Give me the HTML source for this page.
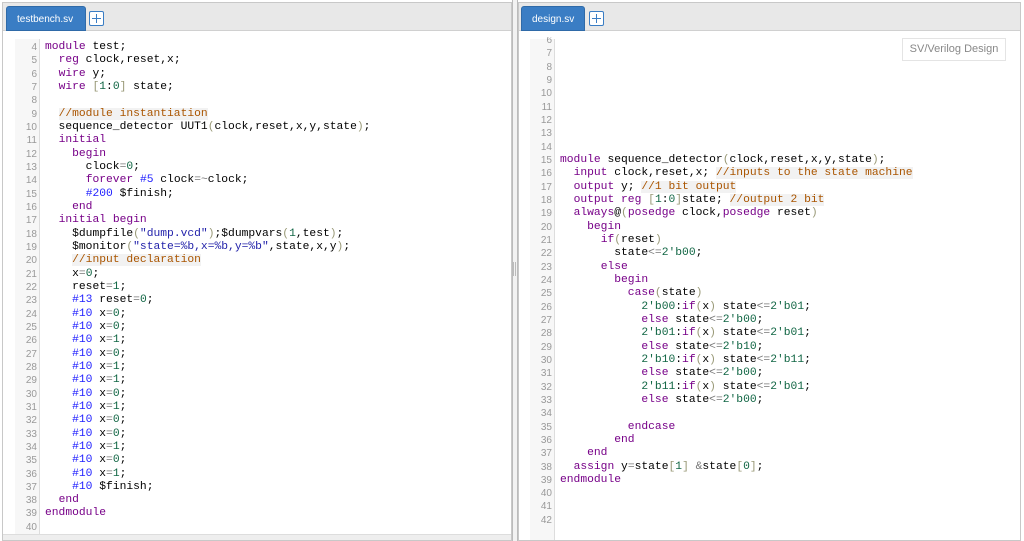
<!DOCTYPE html>
<html><head><meta charset="utf-8"><style>
*{margin:0;padding:0;box-sizing:border-box}
body{width:1024px;height:541px;background:#fff;overflow:hidden;position:relative;font-family:"Liberation Sans",sans-serif}
.panel{position:absolute;top:2px;height:539px;border:1px solid #c8c8c8;background:#fff;overflow:hidden}
.tabbar{position:absolute;left:0;right:0;top:0;height:28px;background:#e8e8e8;border-bottom:1px solid #d0d0d0}
.tab{position:absolute;top:3px;height:25px;background:#3a7dc4;color:#fff;font-size:10px;line-height:25px;padding-left:10px;border-radius:3px 3px 0 0;border:1px solid #2f6aa8}
.plus{position:absolute;top:8px;width:15px;height:15px;border:1.5px solid #3a7dc4;border-radius:2px;background:#fff}
.plus:before{content:"";position:absolute;left:2px;right:2px;top:5.5px;height:1.5px;background:#3a7dc4}
.plus:after{content:"";position:absolute;top:2px;bottom:2px;left:5.5px;width:1.5px;background:#3a7dc4}
.gut{position:absolute;top:36px;bottom:0;width:25px;background:#f7f7f7;border-right:1px solid #ddd}
.code{position:absolute;font-family:"Liberation Mono",monospace;font-size:11.3px;line-height:13.33px;white-space:pre;color:#000}
.nums{position:absolute;font-family:"Liberation Sans",sans-serif;font-size:10px;line-height:13.33px;color:#999;text-align:right;width:22px;white-space:pre}
.k{color:#708}.n{color:#164}.h{color:#22f}.s{color:#22a}.c{color:#a50;background:#f2f2f2}.p{color:#997}.o{color:#777}
.hs{position:absolute;left:0;right:0;bottom:0;height:6px;background:#eee;border-top:1px solid #ddd}
</style></head><body>
<div style="position:absolute;left:512px;top:0;width:6px;height:541px;background:#f2f2f2;border-left:1px solid #bbb;border-right:1px solid #bbb"></div>
<div style="position:absolute;left:513px;top:262px;width:3px;height:14px;border-left:1px solid #bbb;border-right:1px solid #bbb"></div>

<div class="panel" style="left:2px;width:510px">
<div class="tabbar"></div>
<div class="tab" style="left:3px;width:80px">testbench.sv</div>
<div class="plus" style="left:86px"></div>
<div class="gut" style="left:12px"></div>
<div class="nums" style="left:12px;top:38px">4
5
6
7
8
9
10
11
12
13
14
15
16
17
18
19
20
21
22
23
24
25
26
27
28
29
30
31
32
33
34
35
36
37
38
39
40
41</div>
<div class="code" style="left:42px;top:38px"><span class="k">module</span> test;
  <span class="k">reg</span> clock,reset,x;
  <span class="k">wire</span> y;
  <span class="k">wire</span> <span class="p">[</span><span class="n">1</span>:<span class="n">0</span><span class="p">]</span> state;

  <span class="c">//module instantiation</span>
  sequence_detector UUT1<span class="p">(</span>clock,reset,x,y,state<span class="p">)</span>;
  <span class="k">initial</span>
    <span class="k">begin</span>
      clock<span class="o">=</span><span class="n">0</span>;
      <span class="k">forever</span> <span class="h">#5</span> clock<span class="o">=~</span>clock;
      <span class="h">#200</span> $finish;
    <span class="k">end</span>
  <span class="k">initial</span> <span class="k">begin</span>
    $dumpfile<span class="p">(</span><span class="s">"dump.vcd"</span><span class="p">)</span>;$dumpvars<span class="p">(</span><span class="n">1</span>,test<span class="p">)</span>;
    $monitor<span class="p">(</span><span class="s">"state=%b,x=%b,y=%b"</span>,state,x,y<span class="p">)</span>;
    <span class="c">//input declaration</span>
    x<span class="o">=</span><span class="n">0</span>;
    reset<span class="o">=</span><span class="n">1</span>;
    <span class="h">#13</span> reset<span class="o">=</span><span class="n">0</span>;
    <span class="h">#10</span> x<span class="o">=</span><span class="n">0</span>;
    <span class="h">#10</span> x<span class="o">=</span><span class="n">0</span>;
    <span class="h">#10</span> x<span class="o">=</span><span class="n">1</span>;
    <span class="h">#10</span> x<span class="o">=</span><span class="n">0</span>;
    <span class="h">#10</span> x<span class="o">=</span><span class="n">1</span>;
    <span class="h">#10</span> x<span class="o">=</span><span class="n">1</span>;
    <span class="h">#10</span> x<span class="o">=</span><span class="n">0</span>;
    <span class="h">#10</span> x<span class="o">=</span><span class="n">1</span>;
    <span class="h">#10</span> x<span class="o">=</span><span class="n">0</span>;
    <span class="h">#10</span> x<span class="o">=</span><span class="n">0</span>;
    <span class="h">#10</span> x<span class="o">=</span><span class="n">1</span>;
    <span class="h">#10</span> x<span class="o">=</span><span class="n">0</span>;
    <span class="h">#10</span> x<span class="o">=</span><span class="n">1</span>;
    <span class="h">#10</span> $finish;
  <span class="k">end</span>
<span class="k">endmodule</span>
</div>
<div class="hs"></div>
</div>

<div class="panel" style="left:518px;width:503px">
<div class="tabbar"></div>
<div class="tab" style="left:2px;width:64px">design.sv</div>
<div class="plus" style="left:70px"></div>
<div class="gut" style="left:11px;top:36px"></div>
<div style="position:absolute;left:10px;right:0;top:34px;bottom:0;overflow:hidden">
<div class="nums" style="left:1px;top:-3px">6
7
8
9
10
11
12
13
14
15
16
17
18
19
20
21
22
23
24
25
26
27
28
29
30
31
32
33
34
35
36
37
38
39
40
41
42</div>
<div class="code" style="left:31px;top:-3px">








<span class="k">module</span> sequence_detector<span class="p">(</span>clock,reset,x,y,state<span class="p">)</span>;
  <span class="k">input</span> clock,reset,x; <span class="c">//inputs to the state machine</span>
  <span class="k">output</span> y; <span class="c">//1 bit output</span>
  <span class="k">output</span> <span class="k">reg</span> <span class="p">[</span><span class="n">1</span>:<span class="n">0</span><span class="p">]</span>state; <span class="c">//output 2 bit</span>
  <span class="k">always</span>@<span class="p">(</span><span class="k">posedge</span> clock,<span class="k">posedge</span> reset<span class="p">)</span>
    <span class="k">begin</span>
      <span class="k">if</span><span class="p">(</span>reset<span class="p">)</span>
        state<span class="o">&lt;=</span><span class="n">2'b00</span>;
      <span class="k">else</span>
        <span class="k">begin</span>
          <span class="k">case</span><span class="p">(</span>state<span class="p">)</span>
            <span class="n">2'b00</span>:<span class="k">if</span><span class="p">(</span>x<span class="p">)</span> state<span class="o">&lt;=</span><span class="n">2'b01</span>;
            <span class="k">else</span> state<span class="o">&lt;=</span><span class="n">2'b00</span>;
            <span class="n">2'b01</span>:<span class="k">if</span><span class="p">(</span>x<span class="p">)</span> state<span class="o">&lt;=</span><span class="n">2'b01</span>;
            <span class="k">else</span> state<span class="o">&lt;=</span><span class="n">2'b10</span>;
            <span class="n">2'b10</span>:<span class="k">if</span><span class="p">(</span>x<span class="p">)</span> state<span class="o">&lt;=</span><span class="n">2'b11</span>;
            <span class="k">else</span> state<span class="o">&lt;=</span><span class="n">2'b00</span>;
            <span class="n">2'b11</span>:<span class="k">if</span><span class="p">(</span>x<span class="p">)</span> state<span class="o">&lt;=</span><span class="n">2'b01</span>;
            <span class="k">else</span> state<span class="o">&lt;=</span><span class="n">2'b00</span>;

          <span class="k">endcase</span>
        <span class="k">end</span>
    <span class="k">end</span>
  <span class="k">assign</span> y<span class="o">=</span>state<span class="p">[</span><span class="n">1</span><span class="p">]</span> <span class="o">&amp;</span>state<span class="p">[</span><span class="n">0</span><span class="p">]</span>;
<span class="k">endmodule</span>
</div>
</div>
<div style="position:absolute;left:383px;top:35px;width:104px;height:23px;border:1px solid #e4e4e4;background:#fff;color:#888;font-size:11px;line-height:21px;text-align:center">SV/Verilog Design</div>
</div>
</body></html>
